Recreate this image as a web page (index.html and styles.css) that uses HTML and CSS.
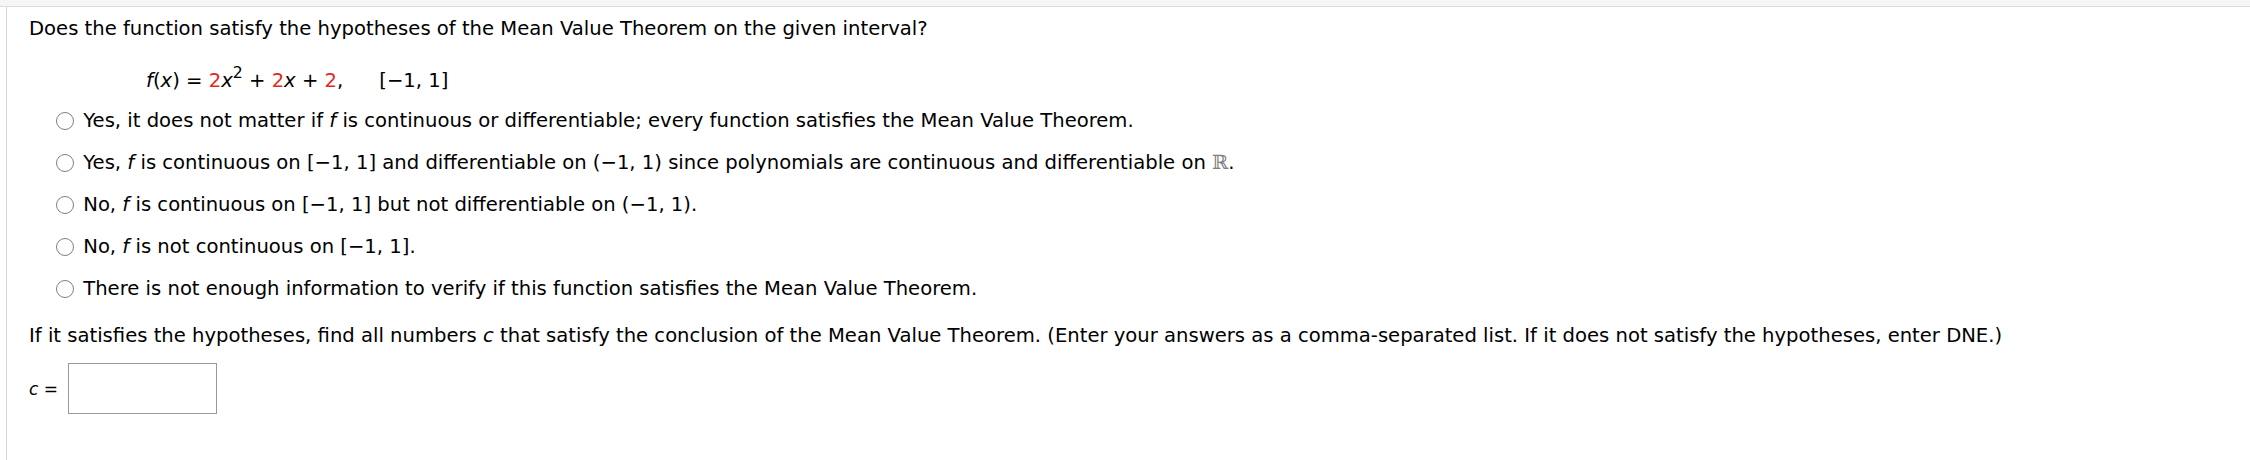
FILE: index.html
```html
<!DOCTYPE html>
<html lang="en">
<head>
    <meta charset="UTF-8" />
    <title>Mean Value Theorem</title>
    <link rel="stylesheet" href="styles.css">
</head>
<body>
    <div class="topbar"></div>

    <div class="content">
        <p class="prompt">Does the function satisfy the hypotheses of the Mean Value Theorem on the given interval?</p>

        <p class="formula">
            <i>f</i>(<i>x</i>) = <span class="red">2</span><i>x</i><sup>2</sup> + <span class="red">2</span><i>x</i> + <span class="red">2</span>,<span class="interval">[−1, 1]</span>
        </p>

        <ul class="options">
            <li><label><input type="radio" name="mvt"> Yes, it does not matter if <i>f</i> is continuous or differentiable; every function satisfies the Mean Value Theorem.</label></li>
            <li><label><input type="radio" name="mvt"> Yes, <i>f</i> is continuous on [−1, 1] and differentiable on (−1, 1) since polynomials are continuous and differentiable on <span class="reals">ℝ</span>.</label></li>
            <li><label><input type="radio" name="mvt"> No, <i>f</i> is continuous on [−1, 1] but not differentiable on (−1, 1).</label></li>
            <li><label><input type="radio" name="mvt"> No, <i>f</i> is not continuous on [−1, 1].</label></li>
            <li><label><input type="radio" name="mvt"> There is not enough information to verify if this function satisfies the Mean Value Theorem.</label></li>
        </ul>

        <p class="followup">If it satisfies the hypotheses, find all numbers <i>c</i> that satisfy the conclusion of the Mean Value Theorem. (Enter your answers as a comma-separated list. If it does not satisfy the hypotheses, enter DNE.)</p>

        <div class="answer">
            <span class="answer-label"><i>c</i> =</span>
            <input type="text" class="answer-box">
        </div>
    </div>
</body>
</html>
```

FILE: styles.css
```css
body {
    margin: 0;
    padding: 0;
    background: #fff;
    color: #000;
    font-family: "DejaVu Sans", Verdana, sans-serif;
    font-size: 19.6px;
    line-height: 24px;
}
.topbar {
    height: 6px;
    background: #f6f6f6;
    border-bottom: 1px solid #dcdcdc;
}
.content {
    margin-left: 6px;
    border-left: 1px solid #d6d6d6;
    padding: 10px 0 60px 22px;
}
p {
    margin: 0;
}
.formula {
    margin-top: 28px;
    padding-left: 117px;
}
.formula sup {
    font-size: 0.8em;
    line-height: 0;
    vertical-align: 0.6em;
}
.red {
    color: #e3291d;
}
.interval {
    margin-left: 36px;
}
.options {
    list-style: none;
    margin: 16px 0 0 0;
    padding: 0 0 0 26px;
    display: flex;
    flex-direction: column;
    gap: 18px;
}
.options label {
    display: flex;
    align-items: center;
    white-space: pre;
}
.options input {
    appearance: none;
    -webkit-appearance: none;
    width: 18px;
    height: 18px;
    margin: 0 3px 0 1px;
    border: 1.5px solid #808080;
    border-radius: 50%;
    background: #fff;
    flex-shrink: 0;
}
.reals {
    font-family: "DejaVu Serif", serif;
    color: #808080;
}
.followup {
    margin-top: 23px;
}
.answer {
    display: flex;
    align-items: center;
    gap: 10px;
    margin-top: 15px;
}
.answer-label {
    font-size: 17px;
}
.answer-box {
    box-sizing: border-box;
    width: 149px;
    height: 51px;
    border: 1px solid #999;
    border-radius: 0;
    margin: 0;
}
```
